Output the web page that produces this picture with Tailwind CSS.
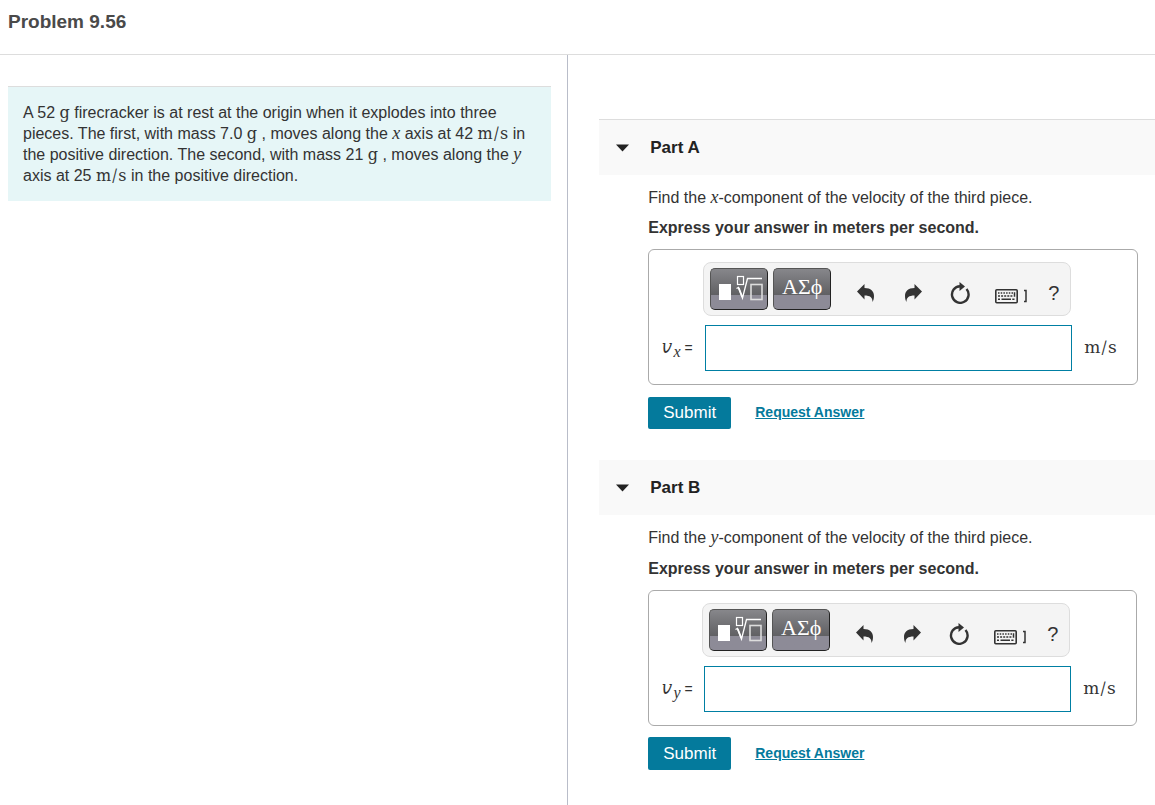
<!DOCTYPE html>
<html lang="en">
<head>
  <meta charset="UTF-8">
  <meta name="viewport" content="width=device-width, initial-scale=1.0">
  <title>Problem 9.56</title>
  <script src="https://cdn.jsdelivr.net/npm/@tailwindcss/browser@4"></script>
</head>
<body class="min-h-screen flex flex-col bg-white text-[#333] text-base font-['Liberation_Sans',Arial,sans-serif]">

  <!-- Shared icons -->
  <svg class="hidden" aria-hidden="true">
    <symbol id="icon-template" viewBox="0 0 46 28">
      <rect x="1" y="9" width="12" height="16" fill="#fff"/>
      <g fill="none" stroke="#fff">
        <rect x="19.500" y="1.500" width="6" height="8" stroke-width="1.200"/>
        <path d="M18.500 13.500l2-1 4 10.500 5-19.500h14.500" stroke-width="1.300"/>
        <path d="M20.700 13l3.600 9" stroke-width="1.800"/>
        <rect x="33" y="9.500" width="11" height="15" stroke="#ddd" stroke-width="1.600"/>
      </g>
    </symbol>
    <symbol id="icon-undo" viewBox="0 0 18 20">
      <path d="M0 8.500L7.500 1v4c6.500 0 9.500 3.500 9.500 8 0 2.500-.6 4.500-1.500 6 .2-4.500-2.500-6.500-8-6.500v4z" fill="#333"/>
    </symbol>
    <symbol id="icon-reset" viewBox="0 0 20 22">
      <path d="M10 4.200A8.300 8.300 0 1 0 16.500 7" fill="none" stroke="#333" stroke-width="2.400"/>
      <path d="M9.500 0l5.500 4.500-5.500 4.500z" fill="#333"/>
    </symbol>
    <symbol id="icon-keyboard" viewBox="0 0 33 15">
      <rect x=".8" y=".8" width="21.400" height="12.900" rx="1" fill="none" stroke="#333" stroke-width="1.600"/>
      <g fill="none" stroke="#333" stroke-width="1.500">
        <path d="M3 4h15" stroke-dasharray="1.500 1.200"/>
        <path d="M3 7h15" stroke-dasharray="2 1.100"/>
        <path d="M3 10.300h2M6.500 10.300h9.500M17.300 10.300h2.200M19.500 3.300v4.500"/>
      </g>
      <path d="M29 1.500h2v11h-2" fill="none" stroke="#333" stroke-width="1.500"/>
    </symbol>
  </svg>

  <header class="h-[55px] shrink-0 px-2 pt-[10px] border-b border-[#ddd]">
    <h1 class="text-[19px] leading-6 font-bold text-[#4a4a4a]">Problem 9.56</h1>
  </header>

  <div class="grow flex">
    <!-- Problem statement -->
    <section class="w-[49.2%] shrink-0 pt-[31px] pl-2 pr-4 border-r border-[#b9bdc9]">
      <p class="p-[15px] border-t border-[#ddd] bg-[#e6f6f7] leading-[21px]">
        A 52 <span class="font-['DejaVu_Math_TeX_Gyre','Liberation_Serif',serif] leading-none">g</span> firecracker is at rest at the origin when it explodes into three pieces. The first, with mass 7.0 <span class="font-['DejaVu_Math_TeX_Gyre','Liberation_Serif',serif] leading-none">g</span> , moves along the <i class="font-['Liberation_Serif',serif] text-lg leading-none">x</i> axis at 42 <span class="font-['DejaVu_Math_TeX_Gyre','Liberation_Serif',serif] leading-none">m/s</span> in the positive direction. The second, with mass 21 <span class="font-['DejaVu_Math_TeX_Gyre','Liberation_Serif',serif] leading-none">g</span> , moves along the <i class="font-['Liberation_Serif',serif] text-lg leading-none">y</i> axis at 25 <span class="font-['DejaVu_Math_TeX_Gyre','Liberation_Serif',serif] leading-none">m/s</span> in the positive direction.
      </p>
    </section>

    <!-- Parts -->
    <main class="grow pl-[31px] pt-16">
      <!-- Part A -->
      <section>
        <h2 class="border-t border-[#ddd] bg-[#f9f9f9] font-bold text-[17px] text-[#222]">
          <button type="button" class="w-full h-[55px] flex items-center gap-5 pl-[17px]">
            <svg class="w-[14px] h-2" viewBox="0 0 14 8"><path d="M0 .500h13L6.500 7.500z" fill="#222"/></svg>
            Part A
          </button>
        </h2>
        <div class="pl-[49px] pt-[13px]">
          <p class="leading-5">Find the <i class="font-['Liberation_Serif',serif] text-lg leading-none">x</i>-component of the velocity of the third piece.</p>
          <p class="mt-[10px] leading-5 font-bold">Express your answer in meters per second.</p>
          <div class="w-fit mt-[11px] p-3 pr-5 pb-[13px] border border-[#aaa] rounded-md">
            <div class="ml-[42px] w-[368px] h-[54px] flex items-center pl-[6px] border border-[#ddd] rounded-lg bg-[#f4f4f4]">
              <button type="button" aria-label="Templates" class="w-[58px] h-[42px] -mt-px flex items-center justify-end pr-[3px] rounded-[5px] border border-[#555] border-r-[#222] border-b-[#222] bg-linear-to-b from-[#87878b] from-0% via-[#606063] via-65% to-[#8d8b97] to-65%">
                <svg class="w-[46px] h-7"><use href="#icon-template"/></svg>
              </button>
              <button type="button" aria-label="Symbols" class="w-[58px] h-[42px] -mt-px ml-[5px] pb-1 rounded-[5px] border border-[#555] border-r-[#222] border-b-[#222] bg-linear-to-b from-[#87878b] from-0% via-[#606063] via-65% to-[#8d8b97] to-65% text-white text-[22px] leading-8 font-['Liberation_Serif',serif]">ΑΣϕ</button>
              <button type="button" aria-label="Undo" class="ml-[26px] mt-2"><svg class="w-[18px] h-5"><use href="#icon-undo"/></svg></button>
              <button type="button" aria-label="Redo" class="ml-[29px] mt-2"><svg class="w-[18px] h-5 -scale-x-100"><use href="#icon-undo"/></svg></button>
              <button type="button" aria-label="Reset" class="ml-7 mt-2"><svg class="w-5 h-[22px]"><use href="#icon-reset"/></svg></button>
              <button type="button" aria-label="Keyboard shortcuts" class="ml-[25px] mt-[14px]"><svg class="w-[33px] h-[15px]"><use href="#icon-keyboard"/></svg></button>
              <button type="button" aria-label="Help" class="ml-5 mt-2 text-xl">?</button>
            </div>
            <div class="mt-[9px] flex items-center">
              <label for="answer-a" class="w-11 flex items-center gap-1 text-sm leading-none"><span class="font-['DejaVu_Math_TeX_Gyre','Liberation_Serif',serif] text-lg leading-none">𝑣<sub class="font-['Liberation_Serif',serif] italic text-base leading-none">x</sub></span> =</label>
              <input id="answer-a" type="text" class="w-[367px] h-[46px] px-2 border border-[#007fa3] bg-white">
              <span class="ml-3 font-['DejaVu_Math_TeX_Gyre','Liberation_Serif',serif] text-[17px] leading-none">m/s</span>
            </div>
          </div>
          <div class="mt-3 flex items-center gap-6">
            <button type="button" class="w-[83px] h-8 rounded-xs bg-[#047a9c] text-white text-[17px]">Submit</button>
            <a href="#" class="pb-0.5 text-sm font-bold text-[#047a9c] underline">Request Answer</a>
          </div>
        </div>
      </section>

      <!-- Part B -->
      <section class="mt-[31px]">
        <h2 class="bg-[#f9f9f9] font-bold text-[17px] text-[#222]">
          <button type="button" class="w-full h-[55px] flex items-center gap-5 pl-[17px]">
            <svg class="w-[14px] h-2" viewBox="0 0 14 8"><path d="M0 .500h13L6.500 7.500z" fill="#222"/></svg>
            Part B
          </button>
        </h2>
        <div class="pl-[49px] pt-[13px]">
          <p class="leading-5">Find the <i class="font-['Liberation_Serif',serif] text-lg leading-none">y</i>-component of the velocity of the third piece.</p>
          <p class="mt-[11px] leading-5 font-bold">Express your answer in meters per second.</p>
          <div class="w-fit mt-[11px] p-3 pr-5 pb-[13px] border border-[#aaa] rounded-md">
            <div class="ml-[41px] w-[368px] h-[54px] flex items-center pl-[6px] border border-[#ddd] rounded-lg bg-[#f4f4f4]">
              <button type="button" aria-label="Templates" class="w-[58px] h-[42px] -mt-px flex items-center justify-end pr-[3px] rounded-[5px] border border-[#555] border-r-[#222] border-b-[#222] bg-linear-to-b from-[#87878b] from-0% via-[#606063] via-65% to-[#8d8b97] to-65%">
                <svg class="w-[46px] h-7"><use href="#icon-template"/></svg>
              </button>
              <button type="button" aria-label="Symbols" class="w-[58px] h-[42px] -mt-px ml-[5px] pb-1 rounded-[5px] border border-[#555] border-r-[#222] border-b-[#222] bg-linear-to-b from-[#87878b] from-0% via-[#606063] via-65% to-[#8d8b97] to-65% text-white text-[22px] leading-8 font-['Liberation_Serif',serif]">ΑΣϕ</button>
              <button type="button" aria-label="Undo" class="ml-[26px] mt-2"><svg class="w-[18px] h-5"><use href="#icon-undo"/></svg></button>
              <button type="button" aria-label="Redo" class="ml-[29px] mt-2"><svg class="w-[18px] h-5 -scale-x-100"><use href="#icon-undo"/></svg></button>
              <button type="button" aria-label="Reset" class="ml-7 mt-2"><svg class="w-5 h-[22px]"><use href="#icon-reset"/></svg></button>
              <button type="button" aria-label="Keyboard shortcuts" class="ml-[25px] mt-[14px]"><svg class="w-[33px] h-[15px]"><use href="#icon-keyboard"/></svg></button>
              <button type="button" aria-label="Help" class="ml-5 mt-2 text-xl">?</button>
            </div>
            <div class="mt-[9px] flex items-center">
              <label for="answer-b" class="w-[43px] flex items-center gap-1 text-sm leading-none"><span class="font-['DejaVu_Math_TeX_Gyre','Liberation_Serif',serif] text-lg leading-none">𝑣<sub class="font-['Liberation_Serif',serif] italic text-base leading-none">y</sub></span> =</label>
              <input id="answer-b" type="text" class="w-[367px] h-[46px] px-2 border border-[#007fa3] bg-white">
              <span class="ml-3 font-['DejaVu_Math_TeX_Gyre','Liberation_Serif',serif] text-[17px] leading-none">m/s</span>
            </div>
          </div>
          <div class="mt-[11px] flex items-center gap-6">
            <button type="button" class="w-[83px] h-[33px] rounded-xs bg-[#047a9c] text-white text-[17px]">Submit</button>
            <a href="#" class="pb-0.5 text-sm font-bold text-[#047a9c] underline">Request Answer</a>
          </div>
        </div>
      </section>
    </main>
  </div>

</body>
</html>
